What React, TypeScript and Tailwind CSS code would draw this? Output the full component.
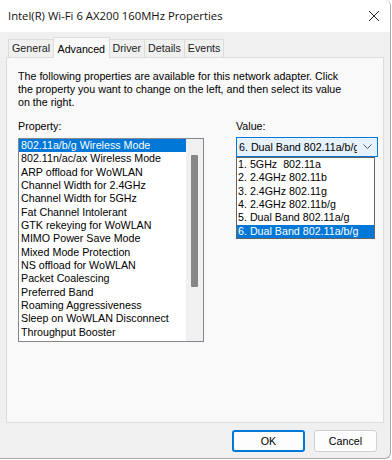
import React from "react";

const properties = [
  "802.11a/b/g Wireless Mode",
  "802.11n/ac/ax Wireless Mode",
  "ARP offload for WoWLAN",
  "Channel Width for 2.4GHz",
  "Channel Width for 5GHz",
  "Fat Channel Intolerant",
  "GTK rekeying for WoWLAN",
  "MIMO Power Save Mode",
  "Mixed Mode Protection",
  "NS offload for WoWLAN",
  "Packet Coalescing",
  "Preferred Band",
  "Roaming Aggressiveness",
  "Sleep on WoWLAN Disconnect",
  "Throughput Booster",
];

const values = [
  "1. 5GHz\u00a0\u00a0802.11a",
  "2. 2.4GHz 802.11b",
  "3. 2.4GHz 802.11g",
  "4. 2.4GHz 802.11b/g",
  "5. Dual Band 802.11a/g",
  "6. Dual Band 802.11a/b/g",
];

const tabs = ["General", "Advanced", "Driver", "Details", "Events"];

export default function App() {
  return (
    <div className="w-[392px] h-[460px] bg-white overflow-hidden">
      <div
        className="w-[391px] h-[459px] flex flex-col bg-[#f0f0f0] border-r border-b border-[#a9a9a9] rounded-br-[6px] rounded-tr-[6px] overflow-hidden text-[10.7px] text-black"
        style={{ fontFamily: '"Liberation Sans", Arial, sans-serif' }}
      >
        {/* title bar */}
        <div className="h-[32px] bg-white flex items-center justify-between pl-[8px] pr-[8px] shrink-0">
          <span className="text-[11.3px] text-[#111]" style={{ fontFamily: '"Open Sans", sans-serif' }}>
            Intel(R) Wi-Fi 6 AX200 160MHz Properties
          </span>
          <svg width="12" height="12" viewBox="0 0 12 12" className="mr-[2px]">
            <path d="M1 1 L11 11 M11 1 L1 11" stroke="#222" strokeWidth="1" />
          </svg>
        </div>

        {/* tabs */}
        <div className="flex items-end pl-[8px] h-[24px] mt-[1px] shrink-0">
          {tabs.map((t) =>
            t === "Advanced" ? (
              <div
                key={t}
                className="h-[21px] px-[3.5px] flex items-start pt-[3px] bg-[#f9f9f9] border border-b-0 border-[#dcdcdc] -mb-px relative z-10 -ml-px"
              >
                {t}
              </div>
            ) : (
              <div
                key={t}
                className={
                  "h-[18px] px-[3px] flex items-center bg-[#f0f0f0] border border-b-0 border-[#dcdcdc] text-[#222] " +
                  (t === "General" ? "" : "-ml-px")
                }
              >
                {t}
              </div>
            )
          )}
        </div>

        {/* panel */}
        <div className="mx-[6px] h-[366px] bg-[#f9f9f9] border border-[#dcdcdc] relative px-[11px] pt-[12px]">
          <p className="leading-[13px] whitespace-nowrap">
            The following properties are available for this network adapter. Click
            <br />
            the property you want to change on the left, and then select its value
            <br />
            on the right.
          </p>

          <div className="flex mt-[11px]">
            <div className="w-[186px] shrink-0">
              <div className="leading-[13px] h-[13px]">Property:</div>
              <div className="mt-[5px] h-[204px] border border-[#828790] bg-white flex">
                <div className="flex-1 flex flex-col overflow-hidden">
                  {properties.map((p, i) => (
                    <div
                      key={p}
                      className={
                        "h-[13.33px] leading-[13.33px] pl-[2px] whitespace-nowrap " +
                        (i === 0 ? "bg-[#0078d7] text-white" : "")
                      }
                    >
                      {p}
                    </div>
                  ))}
                </div>
                <div className="w-[17px] bg-[#f0f0f0] flex justify-center pt-[16px]">
                  <div className="w-[7px] h-[132px] bg-[#868686] rounded-[1px]" />
                </div>
              </div>
            </div>

            <div className="ml-[32px] w-[142px] shrink-0">
              <div className="leading-[13px] h-[13px]">Value:</div>
              <div className="mt-[4px] h-[20px] border border-[#0078d7] bg-[#e5f1fb] flex items-center pl-[2px] pr-[5px]">
                <span className="flex-1 overflow-hidden whitespace-nowrap">
                  6. Dual Band 802.11a/b/g
                </span>
                <svg width="9" height="6" viewBox="0 0 9 6" className="ml-[6px]">
                  <path d="M0.5 0.5 L4.5 4.5 L8.5 0.5" stroke="#555" fill="none" strokeWidth="1" />
                </svg>
              </div>
            </div>
          </div>

          {/* open dropdown */}
          <div className="absolute left-[229px] top-[99px] w-[139px] border border-[#646464] bg-white flex flex-col">
            {values.map((v, i) => (
              <div
                key={v}
                className={
                  "h-[13.33px] leading-[13.33px] pl-[1px] whitespace-nowrap " +
                  (i === 5 ? "bg-[#0078d7] text-white" : "")
                }
              >
                {v}
              </div>
            ))}
          </div>
        </div>

        {/* buttons */}
        <div className="flex justify-end gap-[9px] pr-[13px] mt-[7px]">
          <button className="w-[73px] h-[22px] border-2 border-[#0078d7] rounded-[3px] bg-[#fdfdfd]">
            OK
          </button>
          <button className="w-[63px] h-[22px] border border-[#d0d0d0] rounded-[3px] bg-[#fdfdfd]">
            Cancel
          </button>
        </div>
      </div>
    </div>
  );
}
